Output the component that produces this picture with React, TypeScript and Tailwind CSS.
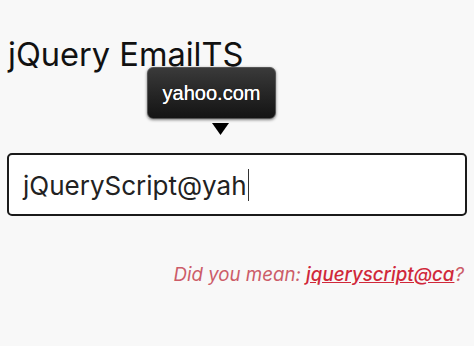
import React from "react";

export default function App() {
  return (
    <div className="relative w-[474px] h-[346px] bg-[#f8f8f8] px-[7px] pt-[35px] font-['Inter',sans-serif] overflow-hidden">
      <h1 className="text-[32.6px] leading-[39px] text-[#111] pl-px">jQuery EmailTS</h1>
      <div className="mt-[79px] h-[63px] rounded-[5px] border-2 border-[#1a1a1a] bg-white flex items-center pl-[14px]">
        <span className="text-[26px] text-[#222] mt-[1px]">jQueryScript@yah</span>
        <span className="w-px h-[32px] bg-[#333] ml-[1px]"></span>
      </div>
      <div className="mt-[45px] text-right pr-[3px] text-[18.7px] leading-[28px] italic text-[#cc5c68]">
        Did you mean: <a className="underline font-medium text-[#d0283a]">jqueryscript@ca</a>?
      </div>

      <div className="absolute left-[147px] top-[67px] w-[129px] h-[52px] rounded-[6px] bg-gradient-to-b from-[#3a3a3a] to-[#141414] border border-[#555] shadow-[0_1px_3px_rgba(0,0,0,0.5)] flex items-center justify-center">
        <span className="font-['Liberation_Sans',Arial,sans-serif] text-[20px] text-white [text-shadow:0_0_0.5px_#fff]">yahoo.com</span>
      </div>
      <svg className="absolute left-[212px] top-[123px]" width="17" height="12" viewBox="0 0 17 12">
        <polygon points="0,0 17,0 8.5,12" fill="#000" />
      </svg>
    </div>
  );
}
